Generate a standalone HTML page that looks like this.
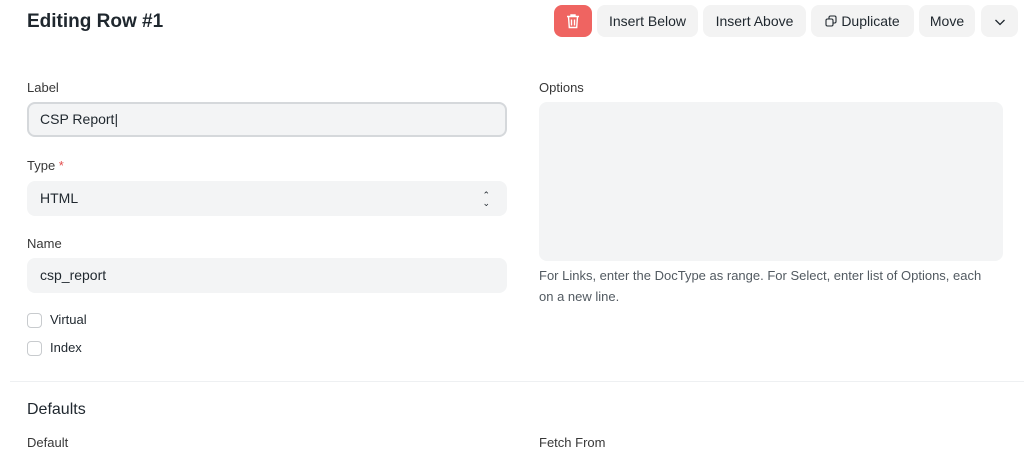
<!DOCTYPE html>
<html><head><style>
*{box-sizing:border-box;margin:0;padding:0}
body{width:1024px;height:456px;overflow:hidden;background:#fff;font-family:"Liberation Sans",sans-serif;color:#1f272e;position:relative;font-size:13px}
.a{position:absolute}
.btn{position:absolute;top:5px;height:32px;background:#f3f3f3;border-radius:8px;font-size:14px;line-height:32px;text-align:center;color:#1f272e}
.lbl{position:absolute;font-size:13px;color:#383838}
.in{position:absolute;left:27px;width:480px;height:35px;background:#f3f4f5;border-radius:8px;font-size:14px;line-height:35px;padding-left:13px}
.cb{position:absolute;left:27px;width:15px;height:15px;border:1px solid #c8cbce;border-radius:4px;background:#fff}
</style></head><body>
<div class="a" style="left:27px;top:11px;font-size:19px;font-weight:bold">Editing Row #1</div>
<div class="btn" style="left:554px;width:38px;background:#ef6461"><svg width="14" height="16" viewBox="0 0 14 16" style="margin-top:8px"><path d="M1 3.5h12M5 3.5V2h4v1.5M2.5 3.5l.8 11h7.4l.8-11M5.5 6.5v6M8.5 6.5v6" fill="none" stroke="#fff" stroke-width="1.4"/></svg></div>
<div class="btn" style="left:597px;width:101px">Insert Below</div>
<div class="btn" style="left:703px;width:103px">Insert Above</div>
<div class="btn" style="left:811px;width:103px"><svg width="12" height="12" viewBox="0 0 12 12" style="vertical-align:-1px;margin-right:4px"><rect x="1" y="4" width="7" height="7" rx="1.5" fill="none" stroke="#1f272e" stroke-width="1.1"/><path d="M4 4V2.5A1.5 1.5 0 0 1 5.5 1h4A1.5 1.5 0 0 1 11 2.5v4A1.5 1.5 0 0 1 9.5 8H8" fill="none" stroke="#1f272e" stroke-width="1.1"/></svg>Duplicate</div>
<div class="btn" style="left:919px;width:56px">Move</div>
<div class="btn" style="left:981px;width:37px"><svg width="12" height="8" viewBox="0 0 12 8"><path d="M1.5 2l4.5 4.5 4.5-4.5" fill="none" stroke="#1f272e" stroke-width="1.3"/></svg></div>
<div class="lbl" style="left:27px;top:80px">Label</div>
<div class="in" style="top:102px;border:2px solid #d5d8db;padding-left:11px;line-height:31px">CSP Report|</div>
<div class="lbl" style="left:27px;top:158px">Type <span style="color:#e24c4c">*</span></div>
<div class="in" style="top:181px">HTML<span style="position:absolute;right:17px;top:0;font-size:9px;line-height:8px;padding-top:10px">⌃<br>⌄</span></div>
<div class="lbl" style="left:27px;top:236px">Name</div>
<div class="in" style="top:258px">csp_report</div>
<div class="cb" style="top:313px"></div><div class="lbl" style="left:50px;top:312px;color:#1f272e">Virtual</div>
<div class="cb" style="top:341px"></div><div class="lbl" style="left:50px;top:340px;color:#1f272e">Index</div>
<div class="lbl" style="left:539px;top:80px">Options</div>
<div class="a" style="left:539px;top:102px;width:464px;height:159px;background:#f3f4f5;border-radius:8px"></div>
<div class="a" style="left:539px;top:265px;width:458px;font-size:13px;line-height:21px;color:#525a61">For Links, enter the DocType as range. For Select, enter list of Options, each on a new line.</div>
<div class="a" style="left:10px;top:381px;width:1014px;height:1px;background:#eef0f2"></div>
<div class="a" style="left:27px;top:401px;font-size:16px;font-weight:500">Defaults</div>
<div class="lbl" style="left:27px;top:435px">Default</div>
<div class="lbl" style="left:539px;top:435px">Fetch From</div>
</body></html>
